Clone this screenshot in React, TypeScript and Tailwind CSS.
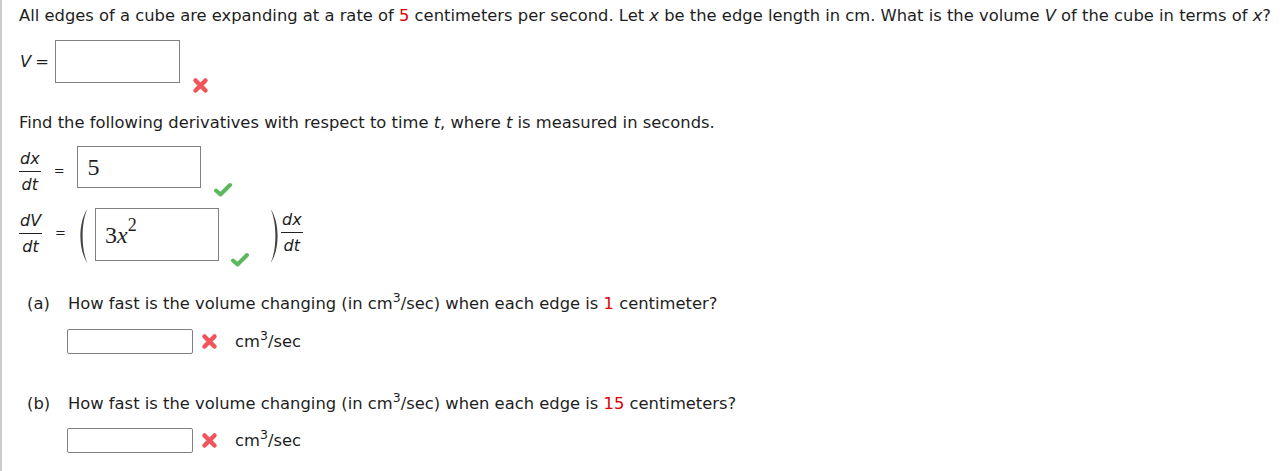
import React from 'react';

const WrongMark = () => (
  <svg width="17" height="17" viewBox="0 0 17 17">
    <path d="M3.5 3.5 L13.5 13.5 M13.5 3.5 L3.5 13.5" stroke="#f2545b" strokeWidth="4.5" strokeLinecap="round" />
  </svg>
);

const RightMark = () => (
  <svg width="20" height="15" viewBox="0 0 20 15">
    <path d="M3 8.5 L7.5 12.5 L17 3" stroke="#5cb85c" strokeWidth="4" fill="none" strokeLinecap="round" strokeLinejoin="round" />
  </svg>
);

const Paren = ({ flip }: { flip?: boolean }) => (
  <svg width="12" height="56" viewBox="0 0 12 56" className={flip ? '-scale-x-100' : ''}>
    <path d="M10.5 1 C1 14 1 42 10.5 55 C4 42 4 14 10.5 1 Z" fill="#444" />
  </svg>
);

const Frac = ({ top }: { top: string }) => (
  <span className="inline-flex flex-col items-center italic text-[16px] leading-[21px]">
    <span className="px-[3px] pb-[2px]">{top}</span>
    <span className="border-t border-[#222] px-[3px] pt-[2px]">dt</span>
  </span>
);

const Sup3 = () => <sup className="text-[12.5px] relative -top-[7px]">3</sup>;

const Red = ({ children }: { children: React.ReactNode }) => (
  <span className="text-[#dd0000]">{children}</span>
);

export default function App() {
  return (
    <div className="min-h-screen bg-white border-l-2 border-[#cccccc] pl-[17px] pt-[6px] [font-family:'DejaVu_Sans',sans-serif] text-[16.35px] text-[#1e1e1e] leading-[20px]">
      <p>
        All edges of a cube are expanding at a rate of <Red>5</Red> centimeters per second. Let{' '}
        <i>x</i> be the edge length in cm. What is the volume <i>V</i> of the cube in terms of <i>x</i>?
      </p>

      {/* V = box */}
      <div className="flex items-start h-[43px] mt-[14px]">
        <span className="flex items-center h-[43px] pl-[1px]">
          <i>V</i>
          <span className="ml-[4px]">=</span>
        </span>
        <div className="ml-[6px] w-[125px] h-[43px] border border-[#808080]" />
        <span className="ml-[12px] mt-[37px]">
          <WrongMark />
        </span>
      </div>

      <p className="mt-[30px]">
        Find the following derivatives with respect to time <i>t</i>, where <i>t</i> is measured in seconds.
      </p>

      {/* dx/dt */}
      <div className="flex items-start h-[42px] mt-[13px]">
        <span className="flex items-center h-[50px] -ml-[2px]">
          <Frac top="dx" />
          <span className="ml-[11px] text-[13px]">=</span>
        </span>
        <div className="ml-[12px] w-[124px] h-[42px] border border-[#808080] flex items-center pl-[10px] [font-family:'Liberation_Serif',serif] text-[24px]">
          5
        </div>
        <span className="ml-[12px] mt-[36px]">
          <RightMark />
        </span>
      </div>

      {/* dV/dt */}
      <div className="flex items-start h-[53px] mt-[20px]">
        <span className="flex items-center h-[50px] -ml-[2px]">
          <Frac top="dV" />
          <span className="ml-[11px] text-[13px]">=</span>
        </span>
        <span className="ml-[11px]">
          <Paren />
        </span>
        <div className="ml-[6px] w-[124px] h-[53px] border border-[#808080] flex items-center pl-[9px] [font-family:'Liberation_Serif',serif] text-[24px]">
          3<i>x</i>
          <sup className="text-[18px] -top-[10px] relative">2</sup>
        </div>
        <span className="ml-[11px] mt-[44px]">
          <RightMark />
        </span>
        <span className="ml-[19px]">
          <Paren flip />
        </span>
        <span className="-ml-[2px] mt-[1px]">
          <Frac top="dx" />
        </span>
      </div>

      {/* (a) */}
      <div className="mt-[33px] flex pl-[8px]">
        <span className="w-[41px]">(a)</span>
        <span>
          How fast is the volume changing (in cm<Sup3 />/sec) when each edge is <Red>1</Red> centimeter?
        </span>
      </div>
      <div className="flex items-center mt-[15px] pl-[48px]">
        <div className="w-[126px] h-[25px] border border-[#808080] rounded-[2px]" />
        <span className="ml-[8px]">
          <WrongMark />
        </span>
        <span className="ml-[17px]">
          cm<Sup3 />/sec
        </span>
      </div>

      {/* (b) */}
      <div className="mt-[40px] flex pl-[8px]">
        <span className="w-[41px]">(b)</span>
        <span>
          How fast is the volume changing (in cm<Sup3 />/sec) when each edge is <Red>15</Red> centimeters?
        </span>
      </div>
      <div className="flex items-center mt-[14px] pl-[48px]">
        <div className="w-[126px] h-[25px] border border-[#808080] rounded-[2px]" />
        <span className="ml-[8px]">
          <WrongMark />
        </span>
        <span className="ml-[17px]">
          cm<Sup3 />/sec
        </span>
      </div>
    </div>
  );
}
